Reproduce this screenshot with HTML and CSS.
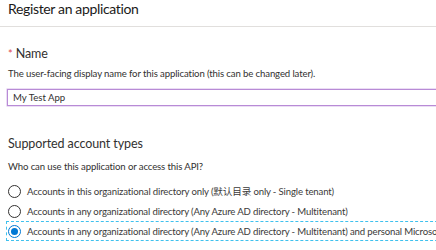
FILE: index.html
```html
<!DOCTYPE html>
<html>
<head>
<meta charset="utf-8">
<link rel="stylesheet" href="styles.css">
</head>
<body>
<div class="header"><h1 class="title">Register an application</h1></div>
<div class="content">
  <div class="section-name">
    <div class="label"><span class="req">*</span> Name</div>
    <div class="desc">The user-facing display name for this application (this can be changed later).</div>
    <div class="input">My Test App</div>
  </div>
  <div class="section-accounts">
    <div class="label">Supported account types</div>
    <div class="desc desc-who">Who can use this application or access this API?</div>
    <div class="radios">
      <div class="radio"><span class="circle"></span><span class="rtext">Accounts in this organizational directory only (默认目录 only - Single tenant)</span></div>
      <div class="radio"><span class="circle"></span><span class="rtext">Accounts in any organizational directory (Any Azure AD directory - Multitenant)</span></div>
      <div class="radio checked"><span class="circle"><span class="dot"></span></span><span class="rtext">Accounts in any organizational directory (Any Azure AD directory - Multitenant) and personal Microsoft</span></div>
    </div>
  </div>
</div>
</body>
</html>
```
FILE: styles.css
```css
html, body {
  margin: 0;
  padding: 0;
  background: #fff;
  overflow: hidden;
  width: 436px;
  height: 250px;
}
body {
  font-family: "Lato", "Noto Sans CJK SC", sans-serif;
  color: #323130;
}
.header {
  height: 27px;
  border-bottom: 1px solid #e1dfdd;
  padding-left: 8px;
  box-sizing: border-box;
}
.title {
  margin: 0;
  font-size: 14px;
  font-weight: 400;
  letter-spacing: -0.35px;
  line-height: 18px;
  color: #1b1a19;
}
.content {
  padding-left: 8px;
}
.section-name {
  padding-top: 19px;
}
.label {
  font-size: 12.5px;
  line-height: 16px;
  letter-spacing: -0.1px;
  color: #323130;
}
.req {
  color: #e0474e;
  font-size: 11px;
}
.desc {
  font-size: 9.6px;
  line-height: 13px;
  letter-spacing: -0.12px;
  margin-top: 5px;
  color: #323130;
}
.desc-who {
  margin-top: 8px;
}
.input {
  margin-top: 9px;
  margin-left: -1px;
  width: 460px;
  height: 17px;
  border: 1px solid #b88bd6;
  box-shadow: 0 0 0 0.5px #d6bbe8;
  font-size: 9.6px;
  line-height: 15px;
  padding-left: 5px;
  box-sizing: border-box;
  color: #323130;
}
.section-accounts {
  padding-top: 30px;
}
.radios {
  margin-top: 8px;
}
.radio {
  display: flex;
  align-items: center;
  height: 20px;
  white-space: nowrap;
  font-size: 9.6px;
  letter-spacing: -0.15px;
  overflow: hidden;
}
.radio.checked {
  outline: 1px dashed #3fc1ee;
  outline-offset: -1px;
  margin-left: -2px;
  padding-left: 2px;
  width: 460px;
}
.circle {
  width: 11px;
  height: 11px;
  border: 1px solid #323130;
  border-radius: 50%;
  display: flex;
  align-items: center;
  justify-content: center;
  flex: none;
  margin-right: 6px;
}
.checked .circle {
  border-color: #0078d4;
}
.dot {
  width: 7px;
  height: 7px;
  border-radius: 50%;
  background: #0078d4;
}
.rtext {
  color: #3b3a39;
}
```
